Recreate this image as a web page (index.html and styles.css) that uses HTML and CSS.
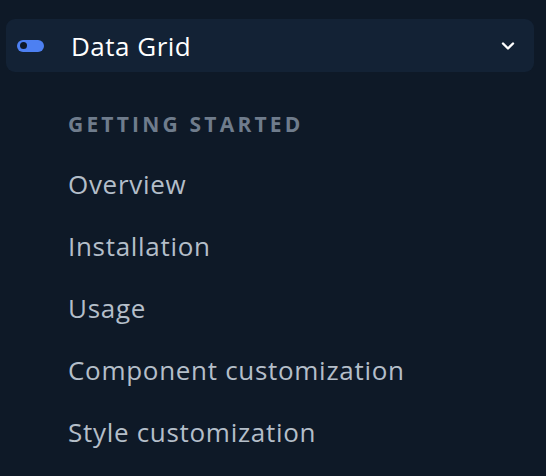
FILE: index.html
```html
<!DOCTYPE html>
<html lang="en">
<head>
  <meta charset="UTF-8">
  <title>Data Grid</title>
  <link rel="stylesheet" href="styles.css">
</head>
<body>

  <nav class="sidebar">
    <div class="section-head">
      <span class="toggle-icon"><span class="knob"></span></span>
      <span class="section-title">Data Grid</span>
      <svg class="chevron" width="14" height="10" viewBox="0 0 14 10">
        <path d="M2 2.5 L7 7.5 L12 2.5" fill="none" stroke="#fff" stroke-width="2.4" stroke-linecap="round" stroke-linejoin="round"/>
      </svg>
    </div>

    <div class="group-label">Getting started</div>
    <ul class="links">
      <li><a href="#">Overview</a></li>
      <li><a href="#">Installation</a></li>
      <li><a href="#">Usage</a></li>
      <li><a href="#">Component customization</a></li>
      <li><a href="#">Style customization</a></li>
    </ul>
  </nav>

</body>
</html>
```

FILE: styles.css
```css
body {
  margin: 0;
  background: #0e1927;
  font-family: "Open Sans", "Noto Sans", sans-serif;
}

.sidebar {
  padding: 19px 12px 0 6px;
}

.section-head {
  display: flex;
  align-items: center;
  height: 53px;
  padding: 0 19px 0 11px;
  background: #132235;
  border-radius: 9px;
}

.toggle-icon {
  display: flex;
  align-items: center;
  width: 27px;
  height: 12px;
  padding: 0 3px;
  box-sizing: border-box;
  background: #4d80f2;
  border-radius: 6px;
}

.knob {
  width: 7px;
  height: 7px;
  border-radius: 50%;
  background: #0e1927;
}

.section-title {
  flex: 1;
  margin-left: 27px;
  color: #fff;
  font-size: 26px;
  font-weight: 500;
  letter-spacing: 0.5px;
}

.chevron {
  display: block;
}

.group-label {
  margin: 38px 0 0 62px;
  color: #6f7c8c;
  font-size: 21px;
  font-weight: 700;
  letter-spacing: 3.2px;
  text-transform: uppercase;
}

.links {
  list-style: none;
  margin: 28px 0 0 62px;
  padding: 0;
}

.links li {
  height: 62px;
}

.links a {
  color: #b4bec9;
  font-size: 26px;
  letter-spacing: 0.7px;
  text-decoration: none;
}
```
